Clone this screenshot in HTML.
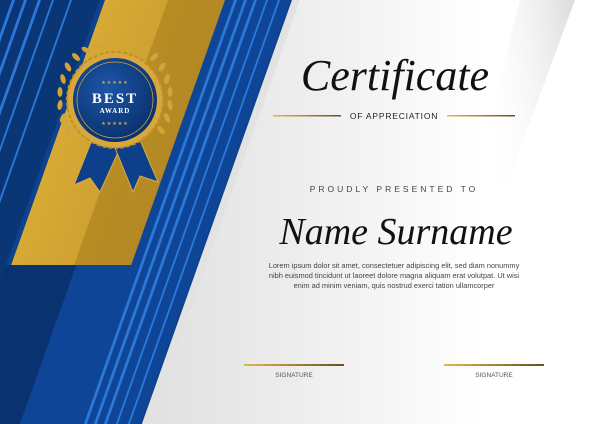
<!DOCTYPE html>
<html><head><meta charset="utf-8"><style>
html,body{margin:0;padding:0;width:600px;height:424px;overflow:hidden}
svg{display:block}
</style></head><body>
<svg width="600" height="424" viewBox="0 0 600 424" xmlns="http://www.w3.org/2000/svg">
<defs>
<linearGradient id="bg" x1="0" y1="0" x2="1" y2="0">
<stop offset="0" stop-color="#d4d4d4"/><stop offset="0.55" stop-color="#f0f0f0"/><stop offset="0.8" stop-color="#ffffff"/></linearGradient>
<linearGradient id="gold" x1="0" y1="0" x2="1" y2="0"><stop offset="0" stop-color="#d7a935"/><stop offset="1" stop-color="#c99a2c"/></linearGradient>
<linearGradient id="gl" x1="0" y1="0" x2="1" y2="0"><stop offset="0" stop-color="#e0b84e"/><stop offset="1" stop-color="#6a5020"/></linearGradient>
<radialGradient id="med" cx="0.4" cy="0.35" r="0.7"><stop offset="0" stop-color="#1b56a8"/><stop offset="1" stop-color="#0a2f6a"/></radialGradient>
<linearGradient id="sh" x1="1" y1="0" x2="0" y2="0.3"><stop offset="0" stop-color="#bdbdbd" stop-opacity="0.55"/><stop offset="1" stop-color="#ffffff" stop-opacity="0"/></linearGradient>
</defs>
<rect width="600" height="424" fill="url(#bg)"/>
<polygon points="520,0 575,0 505,190 470,200" fill="url(#sh)"/>
<polygon points="575,0 600,0 600,424 505,190" fill="#ffffff"/>
<g transform="skewX(-19.5)">
  <rect x="290" y="0" width="10" height="424" fill="#e2e2e2"/>
  <rect x="0" y="0" width="292" height="424" fill="#0d4290"/>
  <rect x="0" y="0" width="100" height="424" fill="#0b3676"/>
  <rect x="170" y="0" width="120" height="424" fill="#0e4596"/>
  <rect x="12" y="0" width="3" height="424" fill="#2a78d8"/>
  <rect x="24" y="0" width="3" height="424" fill="#2a78d8"/>
  <rect x="38" y="0" width="3" height="424" fill="#2a78d8"/>
  <rect x="52" y="0" width="2" height="424" fill="#2a78d8"/>
  <rect x="70" y="0" width="2" height="424" fill="#2a78d8"/>
  <rect x="105" y="0" width="120" height="265" fill="url(#gold)"/>
  <rect x="168" y="0" width="57" height="265" fill="#9c7418" opacity="0.45"/>
  <rect x="100" y="265" width="70" height="159" fill="#0a3170"/>
  <rect x="234" y="0" width="3" height="424" fill="#2a78d8"/>
  <rect x="244" y="0" width="3" height="424" fill="#2a78d8"/>
  <rect x="254" y="0" width="3" height="424" fill="#2a78d8"/>
  <rect x="266" y="0" width="2" height="424" fill="#2a78d8"/>
  <rect x="278" y="0" width="2" height="424" fill="#2a78d8"/>
</g>
<!-- medal -->
<g>
  <polygon points="92,140 74,185 90,178 100,192 120,148" fill="#0d3f8a" stroke="#d9ad45" stroke-width="1"/>
  <polygon points="115,148 133,192 140,176 158,182 140,140" fill="#0d3f8a" stroke="#d9ad45" stroke-width="1"/>
  <g fill="#d3a43c">
    <ellipse cx="97" cy="46" rx="2.5" ry="5" transform="rotate(-75 97 46)"/>
    <ellipse cx="86" cy="50" rx="2.5" ry="5" transform="rotate(-60 86 50)"/>
    <ellipse cx="76" cy="57" rx="2.5" ry="5" transform="rotate(-45 76 57)"/>
    <ellipse cx="68" cy="67" rx="2.5" ry="5" transform="rotate(-30 68 67)"/>
    <ellipse cx="63" cy="79" rx="2.5" ry="5" transform="rotate(-15 63 79)"/>
    <ellipse cx="60" cy="92" rx="2.5" ry="5" transform="rotate(0 60 92)"/>
    <ellipse cx="60" cy="105" rx="2.5" ry="5" transform="rotate(10 60 105)"/>
    <ellipse cx="63" cy="118" rx="2.5" ry="5" transform="rotate(25 63 118)"/>
    <ellipse cx="69" cy="130" rx="2.5" ry="5" transform="rotate(40 69 130)"/>
    <ellipse cx="133" cy="46" rx="2.5" ry="5" transform="rotate(75 133 46)"/>
    <ellipse cx="144" cy="50" rx="2.5" ry="5" transform="rotate(60 144 50)"/>
    <ellipse cx="154" cy="57" rx="2.5" ry="5" transform="rotate(45 154 57)"/>
    <ellipse cx="162" cy="67" rx="2.5" ry="5" transform="rotate(30 162 67)"/>
    <ellipse cx="167" cy="79" rx="2.5" ry="5" transform="rotate(15 167 79)"/>
    <ellipse cx="170" cy="92" rx="2.5" ry="5" transform="rotate(0 170 92)"/>
    <ellipse cx="170" cy="105" rx="2.5" ry="5" transform="rotate(-10 170 105)"/>
    <ellipse cx="167" cy="118" rx="2.5" ry="5" transform="rotate(-25 167 118)"/>
    <ellipse cx="161" cy="130" rx="2.5" ry="5" transform="rotate(-40 161 130)"/>
  </g>
  <circle cx="115" cy="100" r="48" fill="#d6a83e" stroke="#c0902a" stroke-width="2" stroke-dasharray="4 2"/>
  <circle cx="115" cy="100" r="42" fill="url(#med)"/>
  <circle cx="115" cy="100" r="38" fill="none" stroke="#d6a83e" stroke-width="0.8"/>
  <text x="115" y="84" text-anchor="middle" font-family="DejaVu Sans" font-size="5" fill="#d6a83e" letter-spacing="1">★★★★★</text>
  <text x="115" y="103" text-anchor="middle" font-family="Liberation Serif" font-weight="bold" font-size="15" fill="#fff" letter-spacing="2">BEST</text>
  <text x="115" y="113" text-anchor="middle" font-family="Liberation Serif" font-weight="bold" font-size="7" fill="#fff" letter-spacing="1">AWARD</text>
  <text x="115" y="125" text-anchor="middle" font-family="DejaVu Sans" font-size="5" fill="#d6a83e" letter-spacing="1">★★★★★</text>
</g>
<g font-family="Liberation Sans, sans-serif" fill="#333">
  <text x="395" y="90" text-anchor="middle" font-family="Liberation Serif" font-style="italic" font-size="44" fill="#111">Certificate</text>
  <rect x="273" y="115" width="68" height="1.5" fill="url(#gl)"/>
  <rect x="447" y="115" width="68" height="1.5" fill="url(#gl)"/>
  <text x="394" y="119" text-anchor="middle" font-size="8.5" letter-spacing="0.8" fill="#222">OF APPRECIATION</text>
  <text x="394" y="192" text-anchor="middle" font-size="8.5" letter-spacing="3" fill="#444">PROUDLY PRESENTED TO</text>
  <text x="396" y="244" text-anchor="middle" font-family="Liberation Serif" font-style="italic" font-size="38" fill="#111">Name Surname</text>
  <text x="394" y="268" text-anchor="middle" font-size="7.4" fill="#444">Lorem ipsum dolor sit amet, consectetuer adipiscing elit, sed diam nonummy</text>
  <text x="394" y="278" text-anchor="middle" font-size="7.4" fill="#444">nibh euismod tincidunt ut laoreet dolore magna aliquam erat volutpat. Ut wisi</text>
  <text x="394" y="288" text-anchor="middle" font-size="7.4" fill="#444">enim ad minim veniam, quis nostrud exerci tation ullamcorper</text>
  <rect x="244" y="364" width="100" height="2" fill="url(#gl)"/>
  <rect x="444" y="364" width="100" height="2" fill="url(#gl)"/>
  <text x="294" y="377" text-anchor="middle" font-size="6.5" fill="#555">SIGNATURE</text>
  <text x="494" y="377" text-anchor="middle" font-size="6.5" fill="#555">SIGNATURE</text>
</g>
</svg>
</body></html>
